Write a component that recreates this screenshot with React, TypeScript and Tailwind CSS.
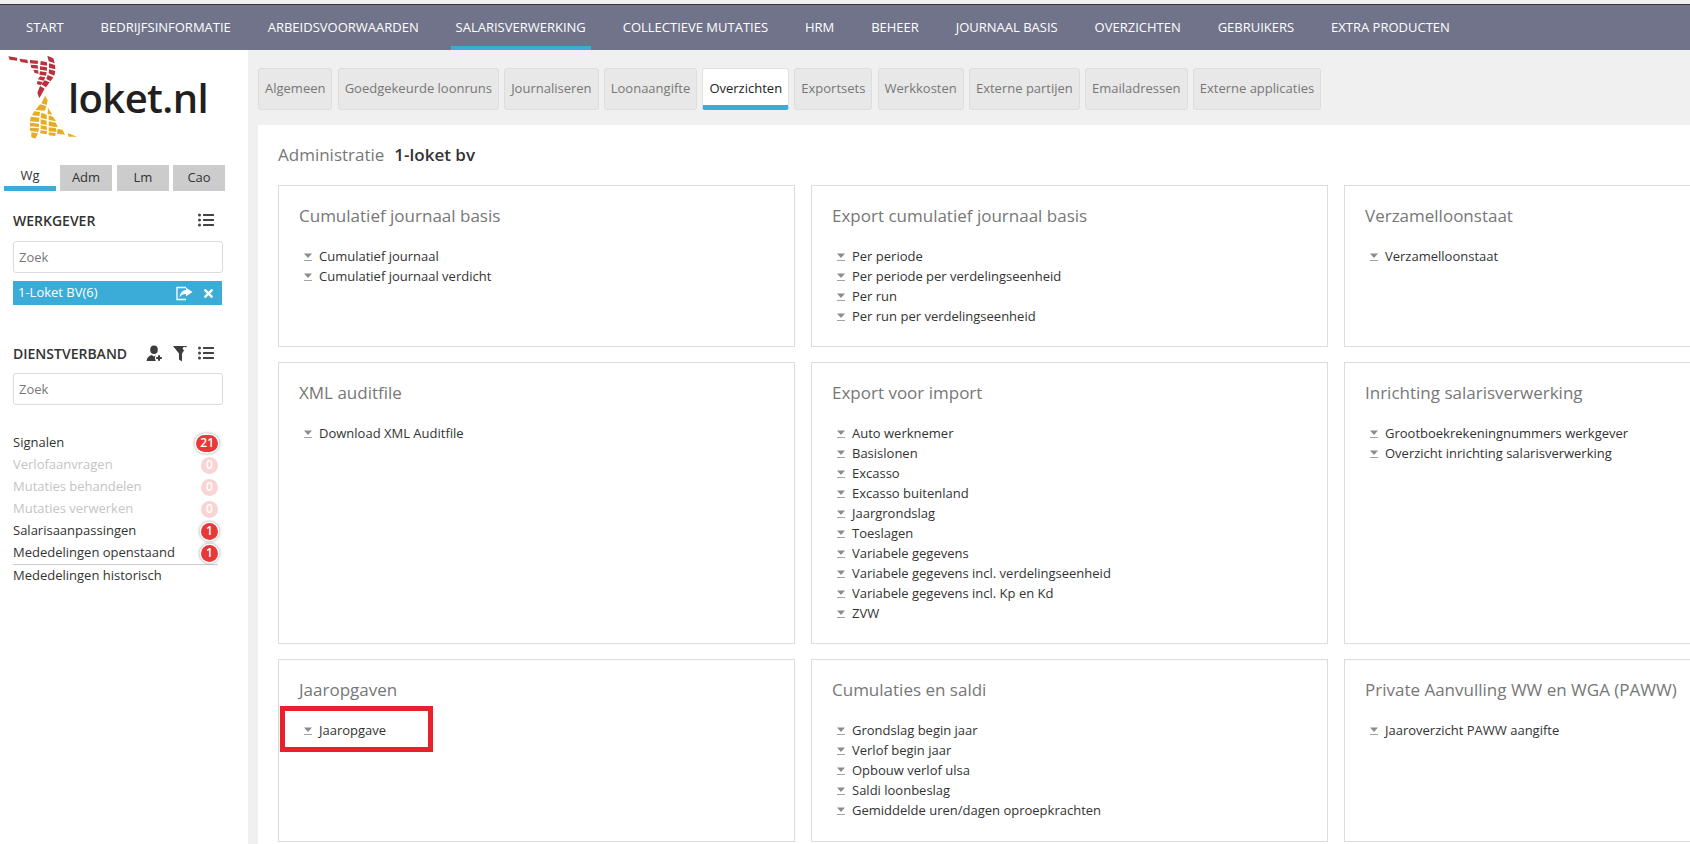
import { FaListUl, FaTimes } from "react-icons/fa";

const nav = ["START", "BEDRIJFSINFORMATIE", "ARBEIDSVOORWAARDEN", "SALARISVERWERKING", "COLLECTIEVE MUTATIES", "HRM", "BEHEER", "JOURNAAL BASIS", "OVERZICHTEN", "GEBRUIKERS", "EXTRA PRODUCTEN"];
const tabs = ["Algemeen", "Goedgekeurde loonruns", "Journaliseren", "Loonaangifte", "Overzichten", "Exportsets", "Werkkosten", "Externe partijen", "Emailadressen", "Externe applicaties"];

const cards: { title: string; items: string[] }[] = [
  { title: "Cumulatief journaal basis", items: ["Cumulatief journaal", "Cumulatief journaal verdicht"] },
  { title: "Export cumulatief journaal basis", items: ["Per periode", "Per periode per verdelingseenheid", "Per run", "Per run per verdelingseenheid"] },
  { title: "Verzamelloonstaat", items: ["Verzamelloonstaat"] },
  { title: "XML auditfile", items: ["Download XML Auditfile"] },
  { title: "Export voor import", items: ["Auto werknemer", "Basislonen", "Excasso", "Excasso buitenland", "Jaargrondslag", "Toeslagen", "Variabele gegevens", "Variabele gegevens incl. verdelingseenheid", "Variabele gegevens incl. Kp en Kd", "ZVW"] },
  { title: "Inrichting salarisverwerking", items: ["Grootboekrekeningnummers werkgever", "Overzicht inrichting salarisverwerking"] },
  { title: "Jaaropgaven", items: ["Jaaropgave"] },
  { title: "Cumulaties en saldi", items: ["Grondslag begin jaar", "Verlof begin jaar", "Opbouw verlof ulsa", "Saldi loonbeslag", "Gemiddelde uren/dagen oproepkrachten"] },
  { title: "Private Aanvulling WW en WGA (PAWW)", items: ["Jaaroverzicht PAWW aangifte"] },
];

const signals = [
  { label: "Signalen", n: "21", on: true },
  { label: "Verlofaanvragen", n: "0", on: false },
  { label: "Mutaties behandelen", n: "0", on: false },
  { label: "Mutaties verwerken", n: "0", on: false },
  { label: "Salarisaanpassingen", n: "1", on: true },
  { label: "Mededelingen openstaand", n: "1", on: true },
];

const red = [
  "25,19 52,23 51,32 29,29", "58,26 82,29 84,40 62,36", "90,30 114,32 113,42 90,40", "142,17 160,25 164,40 146,34",
  "122,33 141,37 141,47 121,44", "147,40 165,45 166,58 147,53", "92,44 113,46 114,56 94,54", "120,49 141,52 141,62 120,59",
  "147,58 166,63 163,77 146,70", "100,59 114,61 116,71 104,69", "120,64 140,67 138,77 118,74", "143,75 160,82 152,94 139,87",
  "120,79 136,82 131,92 114,88", "134,91 149,97 138,112 124,103", "113,93 128,96 122,106 110,102", "120,108 134,116 118,145 112,128",
];
const gold = [
  "135,138 143,150 140,165 124,160", "120,163 139,168 135,182 106,180", "144,174 152,186 157,194 143,192", "103,184 120,186 118,198 96,196",
  "124,188 140,194 140,208 122,204", "146,196 159,200 168,214 146,210", "92,200 118,203 117,216 90,214", "122,208 140,212 140,225 122,222",
  "146,214 168,218 173,232 146,228", "90,218 117,221 117,231 90,229", "122,226 140,229 141,240 122,237", "146,232 168,235 170,246 146,244",
  "90,233 117,235 115,246 90,243", "122,241 141,243 140,253 120,250", "146,247 167,249 166,258 146,256", "94,247 114,250 106,266 94,262",
  "173,236 188,240 195,254 171,251", "203,250 232,260 206,260",
];

function Logo() {
  return (
    <div className="flex h-[95px] items-center">
      <svg viewBox="0 0 234 285" className="h-[95px] w-[78px] shrink-0">
        {red.map((p) => <polygon key={p} points={p} fill="#b9313c" />)}
        {gold.map((p) => <polygon key={p} points={p} fill="#e5ac25" />)}
      </svg>
      <span className="-ml-[10px] text-[40px] leading-none font-semibold tracking-[-0.6px] text-[#231f20]">loket.nl</span>
    </div>
  );
}

function DownloadIcon() {
  return (
    <svg viewBox="0 0 10 9" className="h-[9px] w-[10px] shrink-0">
      <polygon points="1,0.5 9,0.5 5,5" fill="#8c8c8c" />
      <rect x="1" y="7" width="8" height="1" fill="#a3a3a3" />
    </svg>
  );
}

function ShareIcon() {
  return (
    <svg viewBox="0 0 17 15" className="h-[15px] w-[17px]" fill="none">
      <path d="M10 1.5H1v12h9" stroke="currentColor" strokeWidth="1.3" />
      <path d="M10 1.8 16.5 6 10 10.2V8C7 8 5 9 3.5 11.5 3.8 7.5 6 4.5 10 4Z" fill="currentColor" />
    </svg>
  );
}

function UserPlusIcon() {
  return (
    <svg viewBox="0 0 17 17" className="h-[17px] w-[17px]">
      <ellipse cx="8" cy="4.8" rx="3.8" ry="4.3" fill="currentColor" />
      <path d="M0.5 16C0.8 12.5 3 10.8 5.8 10L8 11.5 10.2 10C11 10.2 11.5 10.5 12 11V16Z" fill="currentColor" />
      <circle cx="13" cy="13" r="4" fill="#ffffff" />
      <path d="M12 10.2h2V12h1.8v2H14v1.8h-2V14h-1.8v-2H12Z" fill="currentColor" />
    </svg>
  );
}

function FunnelIcon() {
  return (
    <svg viewBox="0 0 15 17" className="h-[17px] w-[15px]">
      <path d="M0 1H14L9 8.5V16.5L6 14.5V8.5Z" fill="currentColor" />
      <circle cx="11.5" cy="3.5" r="1.7" fill="#ffffff" />
    </svg>
  );
}

function Card({ title, items }: { title: string; items: string[] }) {
  return (
    <div className="overflow-hidden border border-[#dcdcdc] bg-white pt-[18px] pl-5">
      <div className="text-[17px] leading-6 whitespace-nowrap text-[#777777]">{title}</div>
      <ul className="mt-[19px]">
        {items.map((item) => (
          <li key={item} className="flex h-[20px] items-center gap-[6px] pl-[4px] text-[13px] whitespace-nowrap text-[#333333]">
            <DownloadIcon />
            {item}
          </li>
        ))}
      </ul>
    </div>
  );
}

export default function App() {
  return (
    <div className="relative flex h-[844px] w-[1690px] flex-col overflow-hidden bg-white font-['Open_Sans',sans-serif]">
      <div className="h-[4px] shrink-0 bg-[#f0f0f0]" />
      <div className="h-px shrink-0 bg-[#33363f]" />
      <nav className="flex h-[45px] shrink-0 items-stretch bg-[#70738a] pl-[21px] text-[13px] text-white">
        {nav.map((n) => (
          <div key={n} className={`mr-[26.9px] flex items-center border-b-4 px-[5px] pt-1 whitespace-nowrap ${n === "SALARISVERWERKING" ? "border-[#3bacd7]" : "border-transparent"}`}>
            {n}
          </div>
        ))}
      </nav>
      <div className="flex min-h-0 flex-1">
        <aside className="w-[248px] shrink-0 bg-white">
          <Logo />
          <div className="mt-[20px] flex gap-[4px] pl-1 text-[13px] text-[#333333]">
            <div className="flex h-[26px] w-[52px] items-center justify-center border-b-[5px] border-[#3bacd7]">Wg</div>
            <div className="flex h-[26px] w-[52px] items-center justify-center bg-[#cccccc]">Adm</div>
            <div className="ml-px flex h-[26px] w-[52px] items-center justify-center bg-[#cccccc]">Lm</div>
            <div className="flex h-[26px] w-[52px] items-center justify-center bg-[#cccccc]">Cao</div>
          </div>
          <div className="mt-[19px] flex h-[20px] items-center justify-between pr-[34px] pl-[13px]">
            <span className="text-[14px] font-semibold text-[#333333]">WERKGEVER</span>
            <FaListUl className="text-[16px] text-[#444444]" />
          </div>
          <div className="mt-[11px] ml-[13px] flex h-[32px] w-[210px] items-center rounded-[3px] border border-[#dcdcdc] px-[5px] pt-px text-[13px] text-[#777777]">Zoek</div>
          <div className="mt-[8px] ml-[13px] flex h-[24px] w-[209px] items-center justify-between bg-[#3bacd7] pr-[7px] pl-[5px] text-[13px] text-white">
            <span>1-Loket BV(6)</span>
            <span className="flex items-center gap-[9px]">
              <ShareIcon />
              <FaTimes className="text-[13px]" />
            </span>
          </div>
          <div className="mt-[38px] flex h-[20px] items-center justify-between pr-[34px] pl-[13px]">
            <span className="text-[14px] font-semibold text-[#333333]">DIENSTVERBAND</span>
            <span className="flex items-center gap-[10px] text-[#3d3d3d]">
              <UserPlusIcon />
              <FunnelIcon />
              <FaListUl className="text-[16px] text-[#444444]" />
            </span>
          </div>
          <div className="mt-[10px] ml-[13px] flex h-[32px] w-[210px] items-center rounded-[3px] border border-[#dcdcdc] px-[5px] pt-px text-[13px] text-[#777777]">Zoek</div>
          <ul className="mt-[27px] w-[218px] pl-[13px] text-[13px]">
            {signals.map((s) => (
              <li key={s.label} className={`flex h-[22px] items-center justify-between ${s.on ? "text-[#333333]" : "text-[#c4c4c4]"}`}>
                <span>{s.label}</span>
                <span className={`flex h-[17px] min-w-[17px] items-center justify-center rounded-full px-[4px] text-[12px] font-semibold text-white ${s.on ? "bg-[#e8383a] shadow-[0_0_0_1.5px_#fff,0_0_3px_1.5px_#999]" : "bg-[#f9d4d4] shadow-[0_0_0_1.5px_#fff]"}`}>{s.n}</span>
              </li>
            ))}
            <li className="flex h-[22px] items-center border-t border-[#cccccc] text-[#333333]">Mededelingen historisch</li>
          </ul>
        </aside>
        <div className="min-w-0 flex-1 bg-[#f0f0f0] pl-[10px]">
          <div className="flex h-[75px] items-start gap-[5.2px] pt-[18px] text-[13px]">
            {tabs.map((t) =>
              t === "Overzichten" ? (
                <div key={t} className="flex h-[42px] items-center rounded-[3px] border border-[#e2e2e2] border-b-[5px] border-b-[#3bacd7] bg-white px-[6px] pt-[3px] whitespace-nowrap text-[#222222]">{t}</div>
              ) : (
                <div key={t} className="flex h-[42px] items-center rounded-[3px] border border-[#dddddd] bg-[#e8e8e8] px-[6px] whitespace-nowrap text-[#777777]">{t}</div>
              ),
            )}
          </div>
          <div className="h-full bg-white pt-[18px] pl-[20px]">
            <div className="flex h-6 items-center gap-[10px] text-[17px]">
              <span className="text-[#777777]">Administratie</span>
              <span className="font-semibold text-[#333333]">1-loket bv</span>
            </div>
            <div className="mt-[18px] grid w-[1600px] grid-cols-[517px_517px_517px] grid-rows-[162px_282px_183px] gap-x-[16px] gap-y-[15px]">
              {cards.map((c) => <Card key={c.title} title={c.title} items={c.items} />)}
            </div>
          </div>
        </div>
      </div>
      <div className="absolute top-[706px] left-[280px] h-[46px] w-[153px] border-[5px] border-[#e8222d]" />
    </div>
  );
}
